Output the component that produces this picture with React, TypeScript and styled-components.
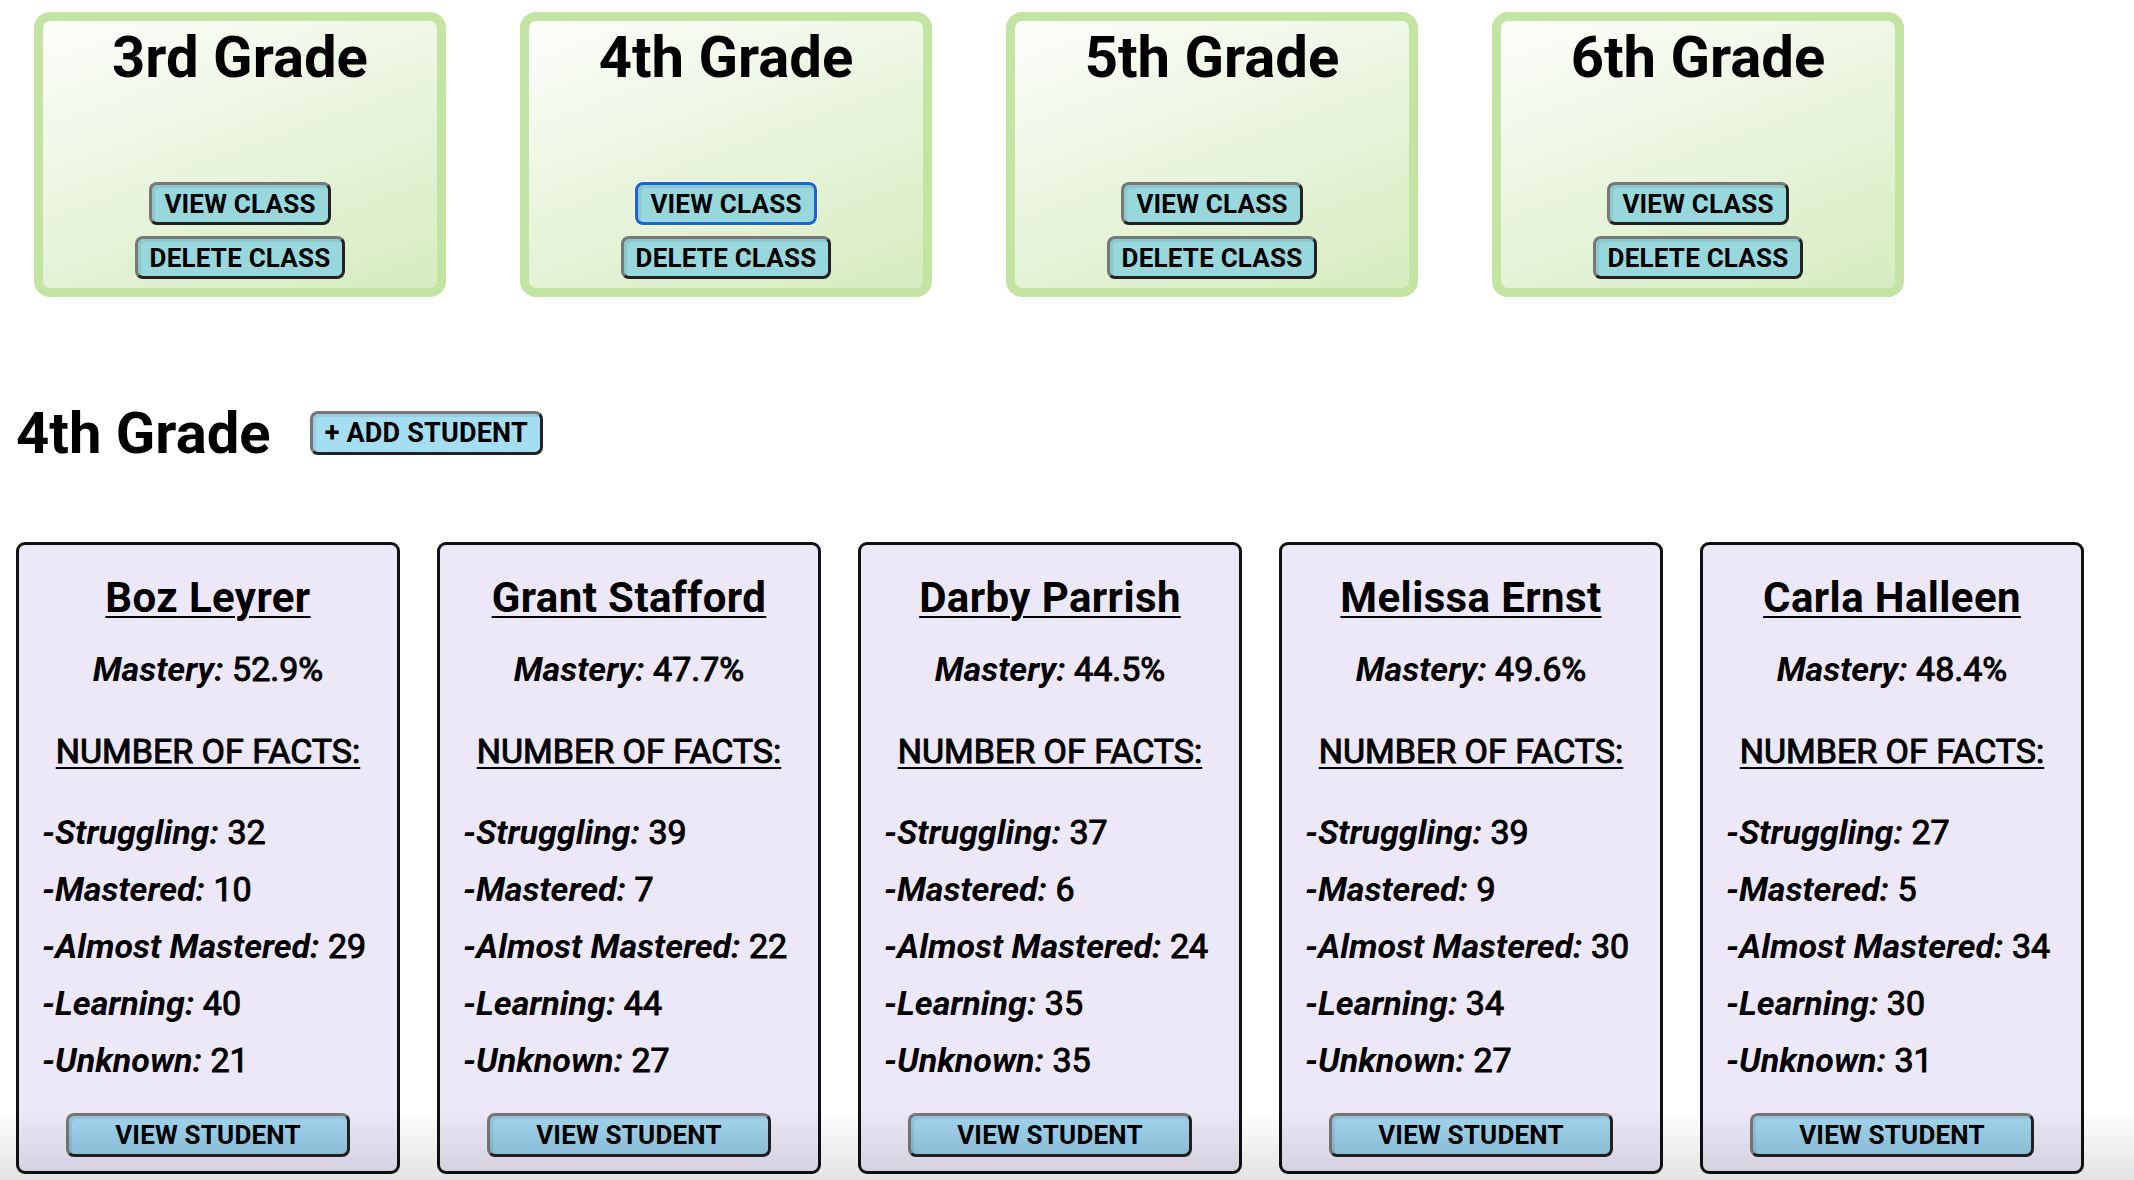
import React, { FC } from "react"
import styled, { createGlobalStyle } from "styled-components"

const GlobalStyle = createGlobalStyle`
    html, body {
        margin: 0;
        padding: 0;
        background: #ffffff;
        font-family: Roboto, "Liberation Sans", Arial, sans-serif;
        color: #000;
    }
`

interface Student {
    name: string
    mastery: string
    struggling: number
    mastered: number
    almost: number
    learning: number
    unknown: number
}

const grades = ["3rd Grade", "4th Grade", "5th Grade", "6th Grade"]

const students: Student[] = [
    { name: "Boz Leyrer", mastery: "52.9%", struggling: 32, mastered: 10, almost: 29, learning: 40, unknown: 21 },
    { name: "Grant Stafford", mastery: "47.7%", struggling: 39, mastered: 7, almost: 22, learning: 44, unknown: 27 },
    { name: "Darby Parrish", mastery: "44.5%", struggling: 37, mastered: 6, almost: 24, learning: 35, unknown: 35 },
    { name: "Melissa Ernst", mastery: "49.6%", struggling: 39, mastered: 9, almost: 30, learning: 34, unknown: 27 },
    { name: "Carla Halleen", mastery: "48.4%", struggling: 27, mastered: 5, almost: 34, learning: 30, unknown: 31 },
]

export default function App() {
    return <>
        <GlobalStyle />
        <Page>
            <GradeRow>
                {grades.map(g => (
                    <GradeCard key={g}>
                        <GradeTitle>{g}</GradeTitle>
                        <GradeActions>
                            <ClassButton focused={g === "4th Grade"}>VIEW CLASS</ClassButton>
                            <ClassButton>DELETE CLASS</ClassButton>
                        </GradeActions>
                    </GradeCard>
                ))}
            </GradeRow>
            <SectionHeader>
                <SectionTitle>4th Grade</SectionTitle>
                <AddButton>+ ADD STUDENT</AddButton>
            </SectionHeader>
            <StudentRow>
                {students.map(s => <StudentCard key={s.name} student={s} />)}
            </StudentRow>
        </Page>
        <BottomShade />
    </>
}

const StudentCard: FC<{ student: Student }> = ({ student }) => (
    <StudentBox>
        <StudentName>{student.name}</StudentName>
        <Mastery><Label>Mastery:</Label> {student.mastery}</Mastery>
        <FactsHeading>NUMBER OF FACTS:</FactsHeading>
        <FactList>
            <Fact><Label>-Struggling:</Label> {student.struggling}</Fact>
            <Fact><Label>-Mastered:</Label> {student.mastered}</Fact>
            <Fact><Label>-Almost Mastered:</Label> {student.almost}</Fact>
            <Fact><Label>-Learning:</Label> {student.learning}</Fact>
            <Fact><Label>-Unknown:</Label> {student.unknown}</Fact>
        </FactList>
        <StudentButton>VIEW STUDENT</StudentButton>
    </StudentBox>
)

const Page = styled.div`
    padding: 12px 16px 0 16px;
`

const GradeRow = styled.div`
    display: flex;
    gap: 74px;
    padding-left: 18px;
`

const GradeCard = styled.div`
    box-sizing: border-box;
    width: 412px;
    height: 285px;
    border: 9px solid #c3e4a3;
    border-radius: 16px;
    background: linear-gradient(160deg, #fdfefb 0%, #ebf5e0 45%, #d6ecc0 100%);
    display: flex;
    flex-direction: column;
    align-items: center;
    padding-bottom: 9px;
`

const GradeTitle = styled.h2`
    margin: 0;
    font-size: 58px;
    line-height: 72px;
    font-weight: 700;
`

const GradeActions = styled.div`
    margin-top: auto;
    display: flex;
    flex-direction: column;
    align-items: center;
    gap: 11px;
`

const BaseButton = styled.button`
    box-sizing: border-box;
    height: 44px;
    padding: 0 12px;
    font-family: Roboto, "Liberation Sans", Arial, sans-serif;
    font-size: 26px;
    font-weight: 700;
    line-height: 38px;
    letter-spacing: 0.2px;
    color: #000;
    border: 3px solid;
    border-color: #777 #222 #222 #777;
    border-radius: 8px;
    box-shadow: inset 3px 3px 0 rgba(0, 0, 0, 0.07);
    cursor: pointer;
`

const ClassButton = styled(BaseButton)<{ focused?: boolean }>`
    height: 43px;
    background: #98d8dc;
    ${p => p.focused && `
        border-color: #1766d6;
        box-shadow: 0 0 0 1px #fff, inset 3px 3px 0 rgba(0, 0, 0, 0.07);
    `}
`

const SectionHeader = styled.div`
    display: flex;
    align-items: center;
    gap: 39px;
    margin-top: 100px;
`

const SectionTitle = styled.h1`
    margin: 0;
    font-size: 58px;
    line-height: 72px;
    font-weight: 700;
`

const AddButton = styled(BaseButton)`
    background: #a5def2;
    font-size: 27px;
`

const StudentRow = styled.div`
    display: flex;
    gap: 37px;
    margin-top: 73px;
`

const StudentBox = styled.div`
    box-sizing: border-box;
    width: 384px;
    border: 3px solid #111;
    border-radius: 9px;
    background: #ece8f8;
    padding: 29px 0 14px 0;
    display: flex;
    flex-direction: column;
    align-items: center;
`

const StudentName = styled.h3`
    margin: 0;
    font-size: 42px;
    line-height: 48px;
    font-weight: 700;
    letter-spacing: 0.4px;
    text-decoration: underline;
    text-underline-offset: 4px;
    text-decoration-thickness: 2px;
`

const Medium = styled.div`
    font-weight: 400;
    -webkit-text-stroke: 1px #000;
`

const Mastery = styled(Medium)`
    margin-top: 29px;
    font-size: 34px;
    line-height: 36px;
`

const Label = styled.span`
    font-weight: 700;
    font-style: italic;
    -webkit-text-stroke: 0;
`

const FactsHeading = styled(Medium)`
    margin-top: 46px;
    font-size: 34px;
    line-height: 36px;
    text-decoration: underline;
    text-underline-offset: 4px;
    text-decoration-thickness: 2px;
`

const FactList = styled.div`
    align-self: stretch;
    margin-top: 35px;
    padding-left: 23px;
    display: flex;
    flex-direction: column;
`

const Fact = styled(Medium)`
    font-size: 34px;
    line-height: 57px;
`

const StudentButton = styled(BaseButton)`
    margin-top: 24px;
    width: 75%;
    background: linear-gradient(180deg, #a3d5ee 0%, #95cbe6 100%);
`

const BottomShade = styled.div`
    position: fixed;
    left: 0;
    right: 0;
    bottom: 0;
    height: 70px;
    pointer-events: none;
    background: linear-gradient(180deg, rgba(0, 0, 0, 0) 0%, rgba(0, 0, 0, 0.11) 100%);
`
